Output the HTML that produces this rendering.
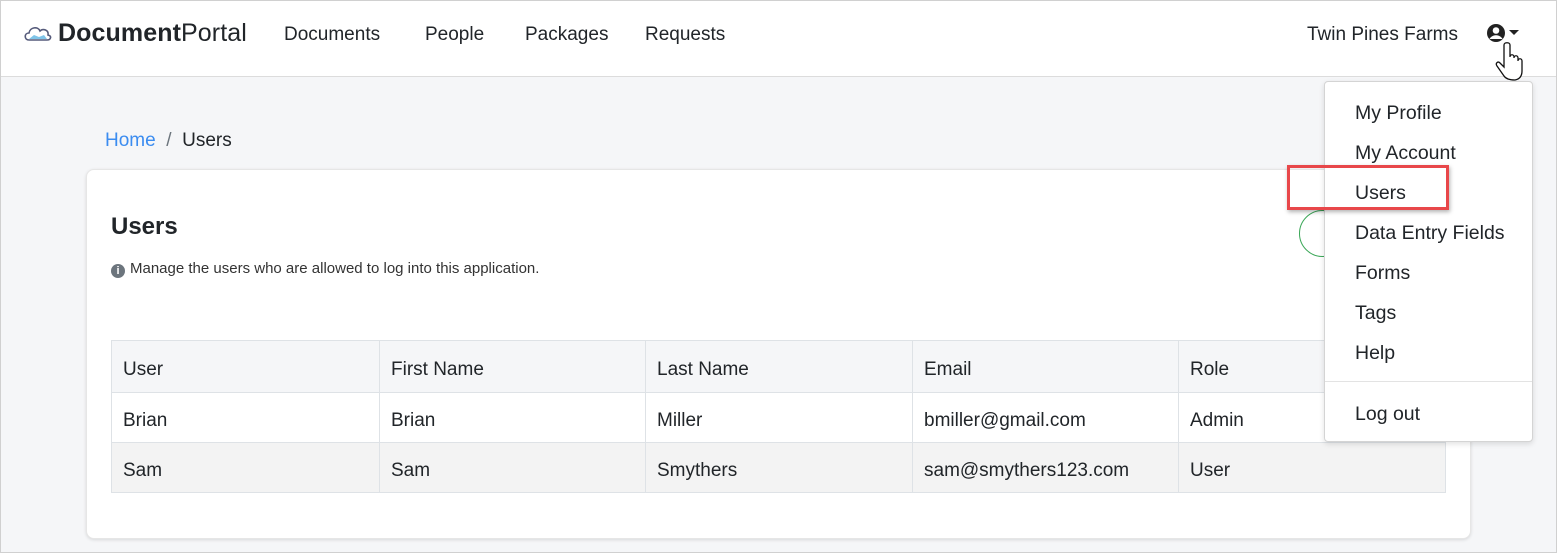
<!DOCTYPE html>
<html><head><style>
*{box-sizing:border-box;margin:0;padding:0}
body{width:1557px;height:553px;overflow:hidden;background:#f5f6f8;font-family:"Segoe UI","Liberation Sans",sans-serif;color:#212529;position:relative}
.frame{position:absolute;left:0;top:0;width:1557px;height:553px;border:1px solid #d0d0d0;pointer-events:none;z-index:9}
.nav{position:absolute;left:0;top:0;width:1557px;height:77px;background:#fff;border-bottom:1px solid #dcdcdc}
.t{position:absolute;white-space:nowrap}
.card{position:absolute;left:86px;top:169px;width:1385px;height:370px;background:#fff;border-radius:8px;box-shadow:0 1px 3px rgba(0,0,0,.12);border:1px solid #e6e6e6}
table{position:absolute;left:111px;top:340px;border-collapse:collapse;font-size:19px}
td{border:1px solid #dee2e6;padding:6px 11px 0;height:50px}
tr.h td{height:52px;background:#f5f6f8}
tr.g td{background:#f3f3f3}
.dd{position:absolute;left:1324px;top:81px;width:209px;height:361px;background:#fff;border:1px solid #d4d4d4;border-radius:4px;box-shadow:0 2px 6px rgba(0,0,0,.12)}
.dd div{position:absolute;left:30px;font-size:19.5px;color:#212529}
</style></head><body>
<div class="frame"></div>
<div class="nav">
<svg class="t" style="left:24px;top:25px" width="28" height="18" viewBox="0 0 28 18"><path d="M5 15 C0 15 0 8 5 8 C6 2 14 1 16 6 C19 3 25 5 24 10 C28 11 27 15 23 15 Z" fill="none" stroke="#555a7a" stroke-width="1.6"/><path d="M5 14 L10 10 L15 12 L20 10 L23 14 Z" fill="#7fc4e8"/></svg>
<div class="t" style="left:58px;top:19px;font-size:25px;letter-spacing:0.1px"><b>Document</b>Portal</div>
<div class="t" style="left:284px;top:24px;font-size:19px">Documents</div>
<div class="t" style="left:425px;top:24px;font-size:19px">People</div>
<div class="t" style="left:525px;top:24px;font-size:19px">Packages</div>
<div class="t" style="left:645px;top:24px;font-size:19px">Requests</div>
<div class="t" style="left:1307px;top:24px;font-size:19px">Twin Pines Farms</div>
<svg class="t" style="left:1486px;top:23px" width="38" height="60" viewBox="0 0 38 60"><circle cx="10" cy="10" r="9" fill="#222"/><circle cx="10" cy="7.5" r="3.3" fill="#fff"/><path d="M3.5 16 C6 11 14 11 16.5 16 Z" fill="#fff"/><path d="M23 7 L33 7 L28 12 Z" fill="#222"/><path d="M18 22 L18 44 L14 40 C12 38 9 40 11 43 L18 53 C20 56 24 57 29 57 C34 56 36 53 36 48 L36 38 C36 35 32 35 32 38 L32 35 C32 32 28 32 28 35 L28 34 C28 31 24 31 24 34 L24 22 C24 19 18 19 18 22 Z" fill="#fff" stroke="#111" stroke-width="1.3"/></svg>
</div>
<div class="t" style="left:105px;top:130px;font-size:19px"><span style="color:#3b8cf0">Home</span> <span style="color:#6c757d">&nbsp;/&nbsp;</span> Users</div>
<div class="card"></div>
<div class="t" style="left:111px;top:213px;font-size:24px;font-weight:600">Users</div>
<div class="t" style="left:111px;top:260px;font-size:15px;color:#333"><span style="display:inline-block;width:14px;height:14px;border-radius:50%;background:#6c757d;color:#fff;font-size:11px;text-align:center;line-height:14px;font-weight:bold;vertical-align:-1px;margin-right:5px">i</span>Manage the users who are allowed to log into this application.</div>
<div class="t" style="left:1299px;top:210px;width:47px;height:47px;border:1px solid #3aa757;border-radius:50%"></div>
<table>
<tr class="h"><td style="width:268px">User</td><td style="width:266px">First Name</td><td style="width:267px">Last Name</td><td style="width:266px">Email</td><td style="width:267px">Role</td></tr>
<tr><td>Brian</td><td>Brian</td><td>Miller</td><td>bmiller@gmail.com</td><td>Admin</td></tr>
<tr class="g"><td>Sam</td><td>Sam</td><td>Smythers</td><td>sam@smythers123.com</td><td>User</td></tr>
</table>
<div class="dd">
<div style="top:20px">My Profile</div>
<div style="top:60px">My Account</div>
<div style="top:100px">Users</div>
<div style="top:140px">Data Entry Fields</div>
<div style="top:180px">Forms</div>
<div style="top:220px">Tags</div>
<div style="top:260px">Help</div>
<div style="top:299px;left:0;width:207px;height:1px;background:#e3e3e3"></div>
<div style="top:321px">Log out</div>
</div>
<div class="t" style="left:1287px;top:165px;width:162px;height:45px;border:3px solid #e8474a;box-shadow:1px 2px 4px rgba(0,0,0,.3)"></div>
</body></html>
